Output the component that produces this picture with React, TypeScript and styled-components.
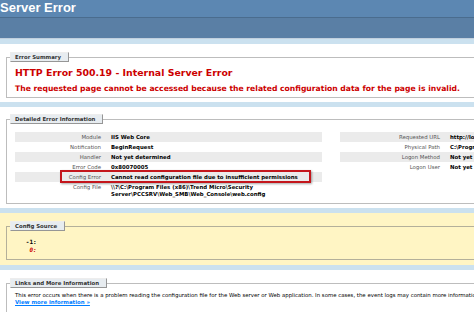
import styled, { createGlobalStyle } from 'styled-components'

const GlobalStyle = createGlobalStyle`
  html, body {
    margin: 0;
    padding: 0;
    background: #cbe1ef;
  }
  body {
    font-family: 'DejaVu Sans', Verdana, sans-serif;
    font-size: 5.4px;
    color: #000;
  }
  #root {
    width: 474px;
    height: 312px;
    overflow: hidden;
  }
`

const Page = styled.div`
  width: 620px;
`
const Header = styled.div`
  height: 17px;
  background: #5c87b2;
`
const Title = styled.h1`
  margin: 0;
  font-family: 'Liberation Sans', Arial, sans-serif;
  font-size: 13px;
  line-height: 15px;
  font-weight: bold;
  color: #fff;
`
const VersionBar = styled.div`
  height: 20px;
  margin-bottom: 5px;
  background: #5a7fa5;
  border-top: 1px solid #4a6c8e;
  border-bottom: 1px solid #c1cfdd;
`
const Section = styled.div<{ $source?: boolean; $gap?: number; $top?: number; $bottom?: number }>`
  background: ${p => (p.$source ? '#fff5c4' : '#fff')};
  margin-top: ${p => p.$gap ?? 0}px;
  padding: ${p => p.$top ?? 8}px 0 ${p => p.$bottom ?? 4}px 6px;
`
const Fieldset = styled.fieldset<{ $bottom?: number; $source?: boolean }>`
  margin: 0;
  min-width: 0;
  border: 1px solid ${p => (p.$source ? '#b4b09a' : '#bdbdbd')};
  padding: 0 8px ${p => p.$bottom ?? 4}px 8px;
`
const Legend = styled.legend`
  margin: 0 0 0 -5px;
  padding: 1px 7px 1px 4px;
  line-height: 6px;
  font-size: 5.4px;
  font-weight: bold;
  color: #333;
  background: #e7ecf0;
  border-top: 1px solid #ededed;
  border-left: 1px solid #ededed;
  border-right: 1px solid #969696;
  border-bottom: 1px solid #969696;
`
const ErrorTitle = styled.h2`
  margin: 5px 0 0 0;
  font-size: 9.4px;
  line-height: 11px;
  font-weight: bold;
  color: #cc0000;
`
const ErrorText = styled.h3`
  margin: 6px 0 0 0;
  font-size: 7.65px;
  line-height: 9px;
  font-weight: bold;
  color: #cc0000;
  white-space: nowrap;
`
const Details = styled.div`
  display: flex;
  gap: 18px;
  margin-top: 8px;
`
const DetailColumn = styled.div<{ $width?: number }>`
  position: relative;
  width: ${p => (p.$width ? `${p.$width}px` : 'auto')};
  flex: ${p => (p.$width ? 'none' : '1')};
  overflow: ${p => (p.$width ? 'visible' : 'hidden')};
`
const Table = styled.table`
  width: 100%;
  border-collapse: collapse;
  border-spacing: 0;
`
const Row = styled.tr<{ $alt?: boolean }>`
  background: ${p => (p.$alt ? '#ebebeb' : 'transparent')};
`
const Label = styled.th<{ $width: number }>`
  width: ${p => p.$width}px;
  padding: 1.5px 5px 1.5px 0;
  box-sizing: border-box;
  line-height: 7px;
  font-weight: normal;
  text-align: right;
  vertical-align: top;
  color: #555;
  white-space: nowrap;
`
const Value = styled.td`
  padding: 1.5px 0 1.5px 5px;
  line-height: 7px;
  font-weight: bold;
  vertical-align: top;
  white-space: nowrap;
`
const Highlight = styled.div`
  position: absolute;
  left: 45px;
  top: 38px;
  width: 251px;
  height: 13px;
  box-sizing: border-box;
  border: 2px solid #c4161c;
  box-shadow: 1px 1px 2px rgba(0, 0, 0, 0.35);
  pointer-events: none;
`
const Source = styled.pre`
  margin: 7px 0 0 0;
  font-family: 'DejaVu Sans Mono', 'Liberation Mono', monospace;
  font-size: 6px;
  line-height: 8px;
  font-weight: bold;
  color: #000;
`
const HighlightCode = styled.span`
  color: #cc0000;
  font-style: italic;
`
const Info = styled.p`
  margin: 4px 0 0 0;
  line-height: 7px;
  white-space: nowrap;
`
const MoreLink = styled.a`
  color: #007eff;
  font-weight: bold;
  text-decoration: underline;
`

const leftRows = [
  { label: 'Module', value: 'IIS Web Core' },
  { label: 'Notification', value: 'BeginRequest' },
  { label: 'Handler', value: 'Not yet determined' },
  { label: 'Error Code', value: '0x80070005' },
  { label: 'Config Error', value: 'Cannot read configuration file due to insufficient permissions' },
]

const rightRows = [
  { label: 'Requested URL', value: 'http://localhost:80/officescan/console/' },
  { label: 'Physical Path', value: 'C:\\Program Files (x86)\\Trend Micro\\Security Server' },
  { label: 'Logon Method', value: 'Not yet determined' },
  { label: 'Logon User', value: 'Not yet determined' },
]

export default function App() {
  return (
    <Page>
      <GlobalStyle />
      <Header>
        <Title>Server Error</Title>
      </Header>
      <VersionBar />

      <Section $top={8} $bottom={4}>
        <Fieldset $bottom={4}>
          <Legend>Error Summary</Legend>
          <ErrorTitle>HTTP Error 500.19 - Internal Server Error</ErrorTitle>
          <ErrorText>
            The requested page cannot be accessed because the related configuration data for the page is invalid.
          </ErrorText>
        </Fieldset>
      </Section>

      <Section $gap={5} $top={7} $bottom={4}>
        <Fieldset $bottom={4}>
          <Legend>Detailed Error Information</Legend>
          <Details>
            <DetailColumn $width={307}>
              <Table>
                <tbody>
                  {leftRows.map((r, i) => (
                    <Row key={r.label} $alt={i % 2 === 0}>
                      <Label $width={91}>{r.label}</Label>
                      <Value>{r.value}</Value>
                    </Row>
                  ))}
                  <Row>
                    <Label $width={91}>Config File</Label>
                    <Value>
                      \\?\C:\Program Files (x86)\Trend Micro\Security
                      <br />
                      Server\PCCSRV\Web_SMB\Web_Console\web.config
                    </Value>
                  </Row>
                </tbody>
              </Table>
              <Highlight />
            </DetailColumn>
            <DetailColumn>
              <Table>
                <tbody>
                  {rightRows.map((r, i) => (
                    <Row key={r.label} $alt={i % 2 === 0}>
                      <Label $width={105}>{r.label}</Label>
                      <Value>{r.value}</Value>
                    </Row>
                  ))}
                </tbody>
              </Table>
            </DetailColumn>
          </Details>
        </Fieldset>
      </Section>

      <Section $source $gap={5} $top={8} $bottom={5}>
        <Fieldset $source $bottom={5}>
          <Legend>Config Source</Legend>
          <Source>
            {'   -1: \n'}
            <HighlightCode>{'    0: '}</HighlightCode>
          </Source>
        </Fieldset>
      </Section>

      <Section $gap={5} $top={8} $bottom={8}>
        <Fieldset $bottom={8}>
          <Legend>Links and More Information</Legend>
          <Info>
            This error occurs when there is a problem reading the configuration file for the Web server or Web
            application. In some cases, the event logs may contain more information about what caused this error.
            <br />
            <MoreLink href="#">View more information &raquo;</MoreLink>
          </Info>
        </Fieldset>
      </Section>
    </Page>
  )
}
